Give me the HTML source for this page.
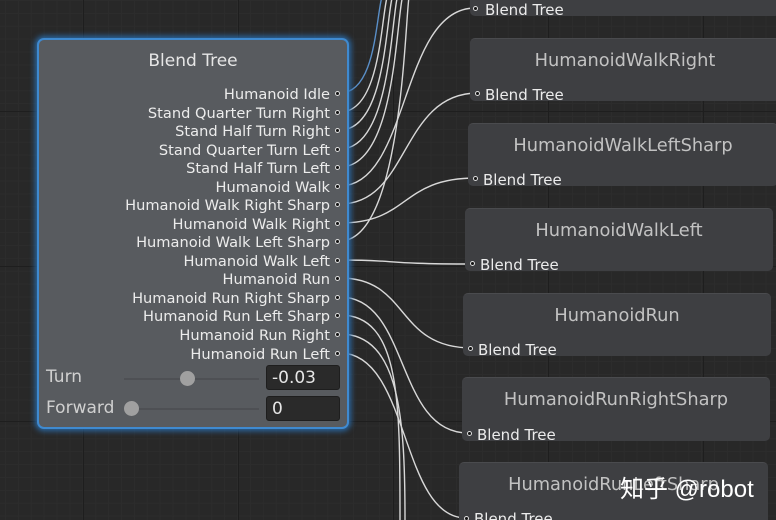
<!DOCTYPE html>
<html><head><meta charset="utf-8"><style>
html,body{margin:0;width:776px;height:520px;overflow:hidden}
body{background:#282828;font-family:"DejaVu Sans","Liberation Sans",sans-serif;position:relative}
.grid{position:absolute;inset:0;background-image:linear-gradient(#1e1e1e 1px,transparent 1px),linear-gradient(90deg,#1e1e1e 1px,transparent 1px),linear-gradient(#2c2c2c 1px,transparent 1px),linear-gradient(90deg,#2c2c2c 1px,transparent 1px);background-size:155px 155px,155px 155px,12.9px 12.9px,12.9px 12.9px;background-position:0 -44px,83px 0,0 0,5px 0}
.main{position:absolute;left:37px;top:38px;width:308px;height:387px;background:#585b5f;border:2px solid #3f8ad0;border-radius:7px;box-shadow:0 0 6px 2px #2b6aa6}
.main h1{margin:0;position:absolute;top:11px;width:100%;text-align:center;font-weight:normal;font-size:17px;color:#e6e6e6}
.out{position:absolute;right:17px;font-size:14.6px;color:#ececec;white-space:nowrap;line-height:18px}
.lbl{position:absolute;left:7px;font-size:17px;color:#d0d0d0}
.fld{position:absolute;left:227px;width:74px;height:25px;background:#2a2a2a;border:1px solid #1e1e1e;border-radius:3px;color:#e6e6e6;font-size:17px;line-height:25px;padding-left:5px;box-sizing:border-box}
.track{position:absolute;height:2px;background:#4e5054;left:85px;width:135px}
.knob{position:absolute;width:15px;height:15px;border-radius:50%;background:#a0a0a0}
.node{position:absolute;background:#3e3f42;border-radius:5px;border-top:1px solid #4a4b4e}
.node .t{position:absolute;top:11px;width:100%;text-align:center;color:#c2c2c2;font-size:17.8px}
.node .b{position:absolute;left:15px;bottom:-3px;color:#ececec;font-size:15px}
.p{position:absolute;width:3px;height:3px;border:1.5px solid #ddd;background:#111;border-radius:50%}
svg{position:absolute;left:0;top:0}
.wm{position:absolute;left:620px;top:469px;color:#fff;font-size:24px;font-family:"Liberation Sans","Noto Sans CJK SC",sans-serif}
</style></head><body>
<div class="grid"></div>
<svg width="776" height="520" fill="none" stroke-width="1.4">
<path d="M340 93 C380 93 375 0 385 -10" stroke="#5a8fc8"/>
<g stroke="#d8d8d8">
<path d="M340 112 C385 112 380 0 390 -10"/>
<path d="M340 130 C390 130 385 0 395 -10"/>
<path d="M340 149 C395 149 390 0 400 -10"/>
<path d="M340 167 C400 167 395 0 405 -10"/>
<path d="M340 186 C410 186 400 8 475 8"/>
<path d="M340 204 C410 204 400 93 478 93"/>
<path d="M340 223 C410 223 400 178 476 178"/>
<path d="M340 241 C405 241 405 0 410 -10"/>
<path d="M340 260 C400 260 380 264 473 264"/>
<path d="M340 278 C410 278 395 348 472 348"/>
<path d="M340 297 C410 297 395 433 468 433"/>
<path d="M340 315 C400 315 400 400 400 520"/>
<path d="M340 334 C400 334 405 420 405 520"/>
<path d="M340 353 C410 353 400 518 466 518"/>
</g></svg>
<div class="main">
<h1>Blend Tree</h1>
<div class="out" style="top:46px">Humanoid Idle</div>
<div class="out" style="top:65px">Stand Quarter Turn Right</div>
<div class="out" style="top:83px">Stand Half Turn Right</div>
<div class="out" style="top:102px">Stand Quarter Turn Left</div>
<div class="out" style="top:120px">Stand Half Turn Left</div>
<div class="out" style="top:139px">Humanoid Walk</div>
<div class="out" style="top:157px">Humanoid Walk Right Sharp</div>
<div class="out" style="top:176px">Humanoid Walk Right</div>
<div class="out" style="top:194px">Humanoid Walk Left Sharp</div>
<div class="out" style="top:213px">Humanoid Walk Left</div>
<div class="out" style="top:231px">Humanoid Run</div>
<div class="out" style="top:250px">Humanoid Run Right Sharp</div>
<div class="out" style="top:268px">Humanoid Run Left Sharp</div>
<div class="out" style="top:287px">Humanoid Run Right</div>
<div class="out" style="top:306px">Humanoid Run Left</div>
<div class="lbl" style="top:327px">Turn</div>
<div class="track" style="top:338px"></div><div class="knob" style="left:141px;top:331px"></div>
<div class="fld" style="top:325px">-0.03</div>
<div class="lbl" style="top:358px">Forward</div>
<div class="track" style="top:368px"></div><div class="knob" style="left:85px;top:361px"></div>
<div class="fld" style="top:356px">0</div>
</div>
<div class="p" style="left:335px;top:91px"></div><div class="p" style="left:335px;top:110px"></div><div class="p" style="left:335px;top:128px"></div><div class="p" style="left:335px;top:147px"></div><div class="p" style="left:335px;top:165px"></div><div class="p" style="left:335px;top:184px"></div><div class="p" style="left:335px;top:202px"></div><div class="p" style="left:335px;top:221px"></div><div class="p" style="left:335px;top:239px"></div><div class="p" style="left:335px;top:258px"></div><div class="p" style="left:335px;top:276px"></div><div class="p" style="left:335px;top:295px"></div><div class="p" style="left:335px;top:313px"></div><div class="p" style="left:335px;top:332px"></div><div class="p" style="left:335px;top:351px"></div>
<div class="node" style="left:470px;top:-40px;width:310px;height:55px"><div class="b">Blend Tree</div></div>
<div class="node" style="left:470px;top:38px;width:310px;height:62px"><div class="t">HumanoidWalkRight</div><div class="b">Blend Tree</div></div>
<div class="node" style="left:468px;top:123px;width:310px;height:62px"><div class="t">HumanoidWalkLeftSharp</div><div class="b">Blend Tree</div></div>
<div class="node" style="left:465px;top:208px;width:308px;height:62px"><div class="t">HumanoidWalkLeft</div><div class="b">Blend Tree</div></div>
<div class="node" style="left:463px;top:293px;width:308px;height:62px"><div class="t">HumanoidRun</div><div class="b">Blend Tree</div></div>
<div class="node" style="left:462px;top:377px;width:308px;height:63px"><div class="t">HumanoidRunRightSharp</div><div class="b">Blend Tree</div></div>
<div class="node" style="left:459px;top:462px;width:309px;height:70px"><div class="t">HumanoidRunLeftSharp</div><div class="b" style="bottom:auto;top:47px">Blend Tree</div></div>
<div class="p" style="left:473px;top:6px"></div><div class="p" style="left:475px;top:91px"></div><div class="p" style="left:473px;top:176px"></div><div class="p" style="left:470px;top:261px"></div><div class="p" style="left:468px;top:346px"></div><div class="p" style="left:467px;top:431px"></div><div class="p" style="left:464px;top:516px"></div>
<div class="wm">知乎 @robot</div>
</body></html>
